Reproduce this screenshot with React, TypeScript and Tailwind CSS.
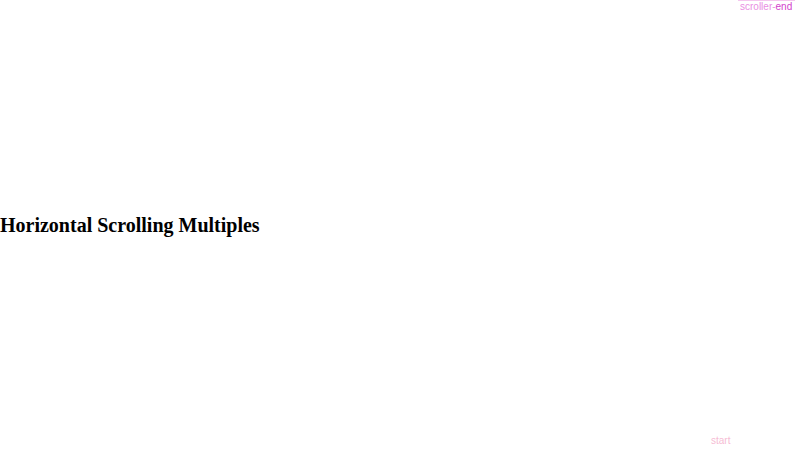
export default function App() {
  return (
    <div className="relative w-[800px] h-[450px] overflow-hidden bg-white">
      <section className="h-[450px] flex items-center">
        <h2 className="m-0 text-[20px] font-bold text-black" style={{ fontFamily: '"Liberation Serif", "Times New Roman", serif' }}>
          Horizontal Scrolling Multiples
        </h2>
      </section>
      <div
        className="absolute top-0 left-[738px] w-[57px] border-t border-[#f4c6ee] text-[10px] leading-[12px] pl-[2px]"
        style={{ fontFamily: '"Liberation Sans", Arial, sans-serif' }}
      >
        <span className="text-[#e98ee2]">scroller-</span>
        <span className="text-[#d23fcb]">end</span>
      </div>
      <div
        className="absolute top-[435px] left-[711px] text-[10px] leading-[12px] text-[#f6bcd4]"
        style={{ fontFamily: '"Liberation Sans", Arial, sans-serif' }}
      >
        start
      </div>
    </div>
  );
}
